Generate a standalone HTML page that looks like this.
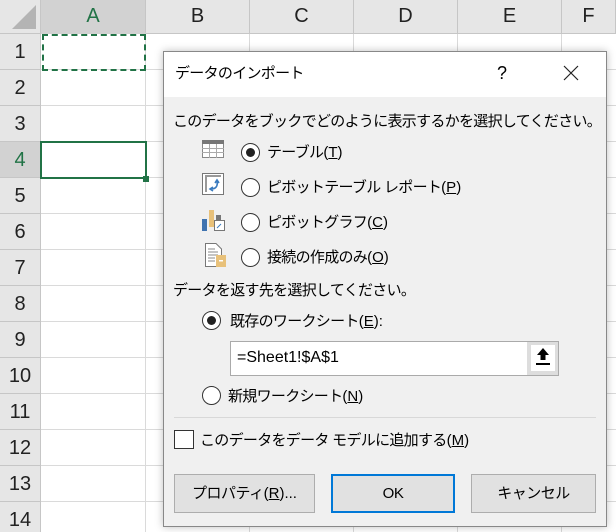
<!DOCTYPE html>
<html><head><meta charset="utf-8"><style>
*{margin:0;padding:0;box-sizing:border-box}
html,body{width:616px;height:532px;overflow:hidden}
body{background:#fff;position:relative;font-family:"Liberation Sans","Noto Sans CJK JP",sans-serif;color:#000}
.a{position:absolute}
.ch{position:absolute;top:0;height:34px;background:#e6e6e6;border-right:1px solid #c6c6c6;border-bottom:1px solid #c6c6c6;font-size:20px;color:#222;text-align:center;line-height:32px}
.rh{position:absolute;left:0;width:41px;height:36px;background:#e6e6e6;border-right:1px solid #c6c6c6;border-bottom:1px solid #c6c6c6;font-size:20px;color:#222;text-align:center;line-height:36px}
.vl{position:absolute;top:34px;bottom:0;width:1px;background:#dadada}
.hl{position:absolute;left:41px;right:0;height:1px;background:#dadada}
.t{position:absolute;font-size:15px;letter-spacing:-0.7px;white-space:nowrap;line-height:24px}
.t u,.t .l{letter-spacing:0}
.r{position:absolute;width:19px;height:19px;border:1px solid #333;border-radius:50%;background:#fff}
.r.on::after{content:"";position:absolute;left:4px;top:4px;width:9px;height:9px;border-radius:50%;background:#222}
.btn{position:absolute;top:474px;height:39px;background:#e1e1e1;border:1px solid #adadad;font-size:15px;letter-spacing:-0.5px;text-align:center;line-height:37px}
u{text-decoration:underline}
</style></head><body>
<div class="ch" style="left:0;width:41px"><div style="position:absolute;right:4px;bottom:4px;width:0;height:0;border-left:24px solid transparent;border-bottom:24px solid #b4b4b4"></div></div>
<div class="ch" style="left:41px;width:105px;background:#d2d2d2;color:#217346;border-bottom:2px solid #d2d2d2">A</div>
<div class="ch" style="left:146px;width:104px">B</div>
<div class="ch" style="left:250px;width:104px">C</div>
<div class="ch" style="left:354px;width:104px">D</div>
<div class="ch" style="left:458px;width:104px">E</div>
<div class="ch" style="left:562px;width:54px">F</div>
<div class="rh" style="top:34px">1</div>
<div class="rh" style="top:70px">2</div>
<div class="rh" style="top:106px">3</div>
<div class="rh" style="top:142px;background:#d2d2d2;color:#217346">4</div>
<div class="rh" style="top:178px">5</div>
<div class="rh" style="top:214px">6</div>
<div class="rh" style="top:250px">7</div>
<div class="rh" style="top:286px">8</div>
<div class="rh" style="top:322px">9</div>
<div class="rh" style="top:358px">10</div>
<div class="rh" style="top:394px">11</div>
<div class="rh" style="top:430px">12</div>
<div class="rh" style="top:466px">13</div>
<div class="rh" style="top:502px">14</div>
<div class="vl" style="left:145px"></div><div class="vl" style="left:249px"></div><div class="vl" style="left:353px"></div><div class="vl" style="left:457px"></div><div class="vl" style="left:561px"></div>
<div class="hl" style="top:69px"></div><div class="hl" style="top:105px"></div><div class="hl" style="top:141px"></div><div class="hl" style="top:177px"></div><div class="hl" style="top:213px"></div><div class="hl" style="top:249px"></div><div class="hl" style="top:285px"></div><div class="hl" style="top:321px"></div><div class="hl" style="top:357px"></div><div class="hl" style="top:393px"></div><div class="hl" style="top:429px"></div><div class="hl" style="top:465px"></div><div class="hl" style="top:501px"></div>
<div class="a" style="left:42px;top:34px;width:104px;height:37px;border:2px dashed #217346"></div>
<div class="a" style="left:40px;top:141px;width:107px;height:38px;border:2px solid #217346"></div>
<div class="a" style="left:143px;top:176px;width:6px;height:6px;background:#217346"></div>

<div class="a" style="left:163px;top:51px;width:444px;height:476px;background:#f0f0f0;border:1px solid #888;box-shadow:0 0 8px rgba(0,0,0,.25)">
 <div class="a" style="left:0;top:0;width:442px;height:45px;background:#fff"></div>
</div>
<div class="t" style="left:175px;top:62px">データのインポート</div>
<div class="t" style="left:497px;top:61px;font-size:18px">?</div>
<svg class="a" style="left:563px;top:65px" width="16" height="16"><path d="M1 1L15 15M15 1L1 15" stroke="#222" stroke-width="1.2"/></svg>
<div class="t" style="left:173px;top:110px">このデータをブックでどのように表示するかを選択してください。</div>

<svg class="a" style="left:202px;top:140px" width="22" height="18"><rect x="0.5" y="0.5" width="21" height="17" fill="#fff" stroke="#888"/><rect x="0" y="0" width="22" height="4" fill="#777"/><path d="M0 8.5H22M0 12.5H22M7.5 4V18M14.5 4V18" stroke="#aaa"/></svg>
<div class="r on" style="left:241px;top:143px"></div>
<div class="t" style="left:267px;top:141px">テーブル<span class="l">(<u>T</u>)</span></div>

<svg class="a" style="left:202px;top:173px" width="22" height="22"><rect x="0.5" y="0.5" width="21" height="21" fill="#fff" stroke="#777"/><path d="M3 3H19M4 3V19" stroke="#999" stroke-width="2"/><path d="M9 16C14 16 16 13 15 8M13 10L15 7L17 10M11 14L8 16L11 18" stroke="#3a7bbf" stroke-width="1.6" fill="none"/></svg>
<div class="r" style="left:241px;top:178px"></div>
<div class="t" style="left:267px;top:176px">ピボットテーブル レポート<span class="l">(<u>P</u>)</span></div>

<svg class="a" style="left:202px;top:208px" width="24" height="24"><rect x="0" y="11" width="5" height="12" fill="#3f73b0"/><rect x="7" y="2" width="5" height="17" fill="#e8c17a"/><rect x="14" y="7" width="5" height="5" fill="#777"/><rect x="12.5" y="12.5" width="10" height="10" fill="#fff" stroke="#777"/><path d="M15 20L19 16" stroke="#3a7bbf"/></svg>
<div class="r" style="left:241px;top:213px"></div>
<div class="t" style="left:267px;top:211px">ピボットグラフ<span class="l">(<u>C</u>)</span></div>

<svg class="a" style="left:205px;top:243px" width="22" height="24"><path d="M0.5 0.5H11L16.5 6V23.5H0.5Z" fill="#fff" stroke="#777"/><path d="M3 6H10M3 9H13M3 12H13M3 15H10M3 18H10" stroke="#888"/><rect x="11" y="12" width="10" height="12" fill="#e8c17a"/><rect x="14" y="17" width="4" height="1.5" fill="#fff"/></svg>
<div class="r" style="left:241px;top:248px"></div>
<div class="t" style="left:267px;top:246px">接続の作成のみ<span class="l">(<u>O</u>)</span></div>

<div class="t" style="left:173px;top:279px">データを返す先を選択してください。</div>
<div class="r on" style="left:202px;top:311px"></div>
<div class="t" style="left:230px;top:310px">既存のワークシート<span class="l">(<u>E</u>):</span></div>
<div class="a" style="left:230px;top:341px;width:329px;height:35px;background:#fff;border:1px solid #aaa"></div>
<div class="t" style="left:237px;top:346px;font-size:16px;letter-spacing:0">=Sheet1!$A$1</div>
<div class="a" style="left:527px;top:342px;width:31px;height:33px;background:#ddd"></div>
<div class="a" style="left:531px;top:345px;width:24px;height:26px;background:#fff"></div>
<svg class="a" style="left:535px;top:347px" width="16" height="20"><path d="M8 1L2 8H5.5V13H10.5V8H14Z" fill="#000"/><rect x="1" y="16" width="14" height="2" fill="#000"/></svg>
<div class="r" style="left:202px;top:386px"></div>
<div class="t" style="left:228px;top:385px">新規ワークシート<span class="l">(<u>N</u>)</span></div>
<div class="a" style="left:174px;top:417px;width:422px;height:1px;background:#d8d8d8"></div>
<div class="a" style="left:174px;top:430px;width:20px;height:19px;background:#fff;border:1px solid #333"></div>
<div class="t" style="left:200px;top:429px">このデータをデータ モデルに追加する<span class="l">(<u>M</u>)</span></div>
<div class="btn" style="left:174px;width:141px">プロパティ<span style="letter-spacing:0">(<u>R</u>)...</span></div>
<div class="btn" style="left:331px;width:124px;border:2px solid #0078d7;line-height:35px">OK</div>
<div class="btn" style="left:471px;width:125px">キャンセル</div>
</body></html>
